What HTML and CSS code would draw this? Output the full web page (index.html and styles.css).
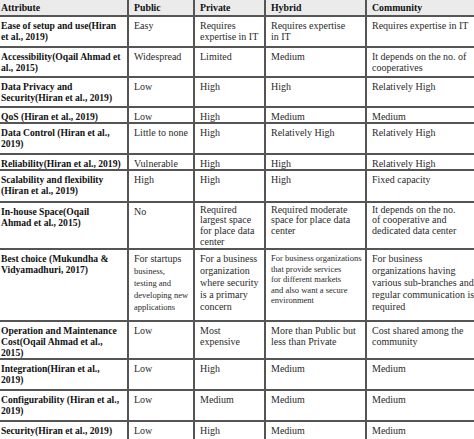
FILE: index.html
```html
<!DOCTYPE html>
<html>
<head>
<meta charset="utf-8">
<link rel="stylesheet" href="styles.css">
</head>
<body>
<div class="cmp">
  <div class="hd attr">Attribute</div><div class="hd">Public</div><div class="hd">Private</div><div class="hd">Hybrid</div><div class="hd">Community</div>

  <div class="attr">Ease of setup and use(Hiran<br>et al., 2019)</div><div>Easy</div><div>Requires<br>expertise in IT</div><div>Requires expertise<br>in IT</div><div>Requires expertise in IT</div>

  <div class="attr">Accessibility(Oqail Ahmad et<br>al., 2015)</div><div>Widespread</div><div>Limited</div><div>Medium</div><div>It depends on the no. of<br>cooperatives</div>

  <div class="attr">Data Privacy and<br>Security(Hiran et al., 2019)</div><div>Low</div><div>High</div><div>High</div><div>Relatively High</div>

  <div class="attr">QoS (Hiran et al., 2019)</div><div>Low</div><div>High</div><div>Medium</div><div>Medium</div>

  <div class="attr">Data Control (Hiran et al.,<br>2019)</div><div>Little to none</div><div>High</div><div>Relatively High</div><div>Relatively High</div>

  <div class="attr">Reliability(Hiran et al., 2019)</div><div>Vulnerable</div><div>High</div><div>High</div><div>Relatively High</div>

  <div class="attr">Scalability and flexibility<br>(Hiran et al., 2019)</div><div>High</div><div>High</div><div>High</div><div>Fixed capacity</div>

  <div class="attr">In-house Space(Oqail<br>Ahmad et al., 2015)</div><div>No</div><div class="tight">Required<br>largest space<br>for place data<br>center</div><div class="tight">Required moderate<br>space for place data<br>center</div><div class="tight">It depends on the no.<br>of cooperative and<br>dedicated data center</div>

  <div class="attr">Best choice (Mukundha &amp;<br>Vidyamadhuri, 2017)</div><div class="loose">For startups<br><span class="small">business,<br>testing and<br>developing new<br>applications</span></div><div class="loose">For a business<br>organization<br>where security<br>is a primary<br>concern</div><div class="small">For business organizations<br>that provide services<br>for different markets<br>and also want a secure<br>environment</div><div class="loose">For business<br>organizations having<br>various sub-branches and<br>regular communication is<br>required</div>

  <div class="attr">Operation and Maintenance<br>Cost(Oqail Ahmad et al.,<br>2015)</div><div>Low</div><div>Most<br>expensive</div><div>More than Public but<br>less than Private</div><div>Cost shared among the<br>community</div>

  <div class="attr">Integration(Hiran et al.,<br>2019)</div><div>Low</div><div>High</div><div>Medium</div><div>Medium</div>

  <div class="attr">Configurability (Hiran et al.,<br>2019)</div><div>Low</div><div>Medium</div><div>Medium</div><div>Medium</div>

  <div class="attr">Security(Hiran et al., 2019)</div><div>Low</div><div>High</div><div>Medium</div><div>Medium</div>
</div>
</body>
</html>
```
FILE: styles.css
```css
html, body {
  margin: 0;
  padding: 0;
  background: #ffffff;
  overflow: hidden;
}
.cmp {
  display: grid;
  grid-template-columns: 127px 64px 69px 99px 110px;
  grid-template-rows: 15px 29px 28px 28px 14px 29px 14px 30px 45px 70px 36px 29px 29px 17px;
  gap: 2px;
  width: 477px;
  background: #555555;
  font-family: "Liberation Serif", "Times New Roman", serif;
  font-size: 10px;
  line-height: 11px;
  color: #2a2a2a;
}
.cmp > div {
  background: #ffffff;
  padding: 3px 2px 0 5px;
  white-space: nowrap;
  overflow: hidden;
}
.cmp > .attr {
  padding-left: 1px;
  font-weight: bold;
  font-size: 9.6px;
  color: #111111;
}
.cmp > .hd {
  background: #ebebeb;
  padding-top: 2px;
  font-weight: bold;
  font-size: 9.8px;
  color: #111111;
}
.cmp > .tight {
  padding-top: 1.5px;
  line-height: 10.8px;
}
.cmp > .loose {
  line-height: 12px;
}
.cmp .small {
  font-size: 8.5px;
  line-height: 10.5px;
}
```
